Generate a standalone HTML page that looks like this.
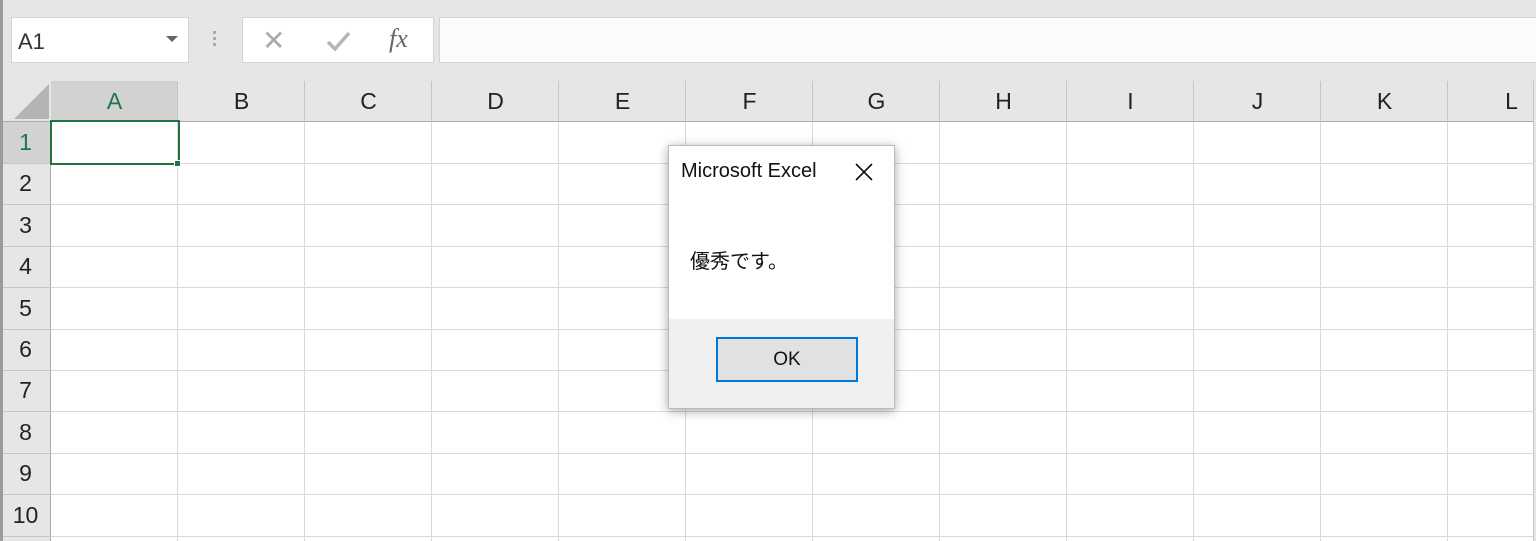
<!DOCTYPE html>
<html><head><meta charset="utf-8"><style>
*{margin:0;padding:0;box-sizing:border-box}
body{width:1536px;height:541px;overflow:hidden;background:#e6e6e6;position:relative;font-family:"Liberation Sans","Noto Sans CJK JP",sans-serif}
.a{position:absolute}
</style></head><body>
<div class="a" style="left:11px;top:17px;width:178px;height:46px;background:#fff;border:1px solid #d4d4d4"></div>
<div class="a" style="left:18px;top:29px;font-size:22px;color:#333">A1</div>
<div class="a" style="left:166px;top:36px;width:0;height:0;border-left:6px solid transparent;border-right:6px solid transparent;border-top:6px solid #666"></div>
<div class="a" style="left:213px;top:31px;width:3px;height:3px;background:#aaa;box-shadow:0 6px #aaa,0 12px #aaa"></div>
<div class="a" style="left:242px;top:17px;width:192px;height:46px;background:#fff;border:1px solid #d4d4d4"></div>
<div class="a" style="left:262px;top:24px;font-size:28px;color:#aaa;font-weight:300">✕</div>
<svg class="a" style="left:326px;top:30px" width="26" height="22"><path d="M2 12 L9 19 L23 3" stroke="#b5b5b5" stroke-width="3.5" fill="none"/></svg>
<div class="a" style="left:389px;top:24px;font-size:26px;color:#666;font-style:italic;font-family:'Liberation Serif',serif">fx</div>
<div class="a" style="left:439px;top:17px;width:1100px;height:46px;background:#fcfcfc;border:1px solid #d4d4d4"></div>
<div class="a" style="left:0;top:81px;width:1533px;height:41px;background:#e6e6e6;border-bottom:1px solid #ababab"></div>
<svg class="a" style="left:14px;top:84px" width="36" height="36"><path d="M35 0 L35 35 L0 35 Z" fill="#b4b4b4"/></svg>
<div class="a" style="left:51px;top:81px;width:127px;height:41px;background:#d2d2d2;border-bottom:2px solid #217346"></div>
<div class="a" style="left:0;top:122px;width:51px;height:419px;background:#e6e6e6;border-right:1px solid #ababab"></div>
<div class="a" style="left:0;top:122px;width:51px;height:41px;background:#d2d2d2"></div>
<div class="a" style="left:51px;top:122px;width:1482px;height:419px;background:#fff"></div>
<div class="a" style="left:1533px;top:81px;width:3px;height:460px;background:#e6e6e6;border-left:1px solid #c6c6c6"></div>
<div id="g"></div>
<script>
var h='',cols='ABCDEFGHIJKL';
for(var i=0;i<12;i++){var x=51+i*127;
h+='<div class="a" style="left:'+x+'px;top:88px;width:127px;text-align:center;font-size:23px;color:'+(i?'#222':'#217346')+'">'+cols[i]+'</div>';
if(i>0)h+='<div class="a" style="left:'+(x-1)+'px;top:81px;width:1px;height:41px;background:#c6c6c6"></div><div class="a" style="left:'+(x-1)+'px;top:122px;width:1px;height:419px;background:#d9d9d9"></div>';}
for(var r=0;r<10;r++){var y=122+r*41.4;
h+='<div class="a" style="left:0;top:'+(y+7)+'px;width:51px;text-align:center;font-size:23px;color:'+(r?'#222':'#217346')+'">'+(r+1)+'</div>';
h+='<div class="a" style="left:0;top:'+(y+41)+'px;width:51px;height:1px;background:#c6c6c6"></div><div class="a" style="left:51px;top:'+(y+41)+'px;width:1482px;height:1px;background:#d9d9d9"></div>';}
document.getElementById('g').innerHTML=h;
</script>
<div class="a" style="left:0;top:0;width:3px;height:541px;background:#9a9a9a"></div>
<div class="a" style="left:50px;top:120px;width:130px;height:45px;border:2px solid #217346"></div>
<div class="a" style="left:174px;top:160px;width:7px;height:7px;background:#217346;border:1px solid #fff"></div>
<div class="a" style="left:668px;top:145px;width:227px;height:264px;background:#f0f0f0;box-shadow:0 2px 10px rgba(0,0,0,.35);border:1px solid #bbb">
<div class="a" style="left:0;top:0;width:225px;height:173px;background:#fff"></div>
<div class="a" style="left:12px;top:14px;font-size:20px;color:#111">Microsoft Excel</div>
<svg class="a" style="left:186px;top:17px" width="18" height="18"><path d="M1 1L17 17M17 1L1 17" stroke="#111" stroke-width="1.6"/></svg>
<div class="a" style="left:21px;top:99px;font-size:20px;color:#111">優秀です。</div>
<div class="a" style="left:47px;top:191px;width:142px;height:45px;background:#e1e1e1;border:2px solid #0078d7;text-align:center;line-height:41px;font-size:19px;color:#111">OK</div>
</div>
</body></html>
